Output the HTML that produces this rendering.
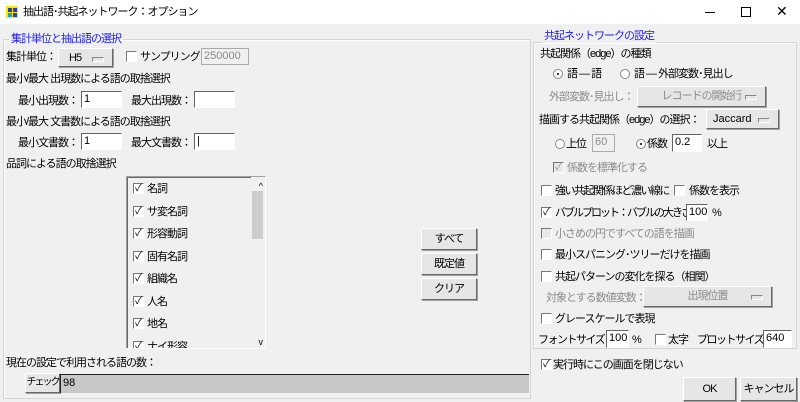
<!DOCTYPE html>
<html><head><meta charset="utf-8"><style>
*{box-sizing:border-box;margin:0;padding:0}
body{width:800px;height:402px;background:#f0f0f0;position:relative;overflow:hidden;font-family:"Liberation Sans","Noto Sans CJK JP",sans-serif;font-size:11px;letter-spacing:-1px;color:#000}
.a{position:absolute;white-space:nowrap;line-height:14px}
.t{letter-spacing:-1.5px}
.u{letter-spacing:-2px}
.g{color:#8a8a8a}
.gb{position:absolute;border:1px solid #d5d5d5;box-shadow:inset 1px 1px 0 #fff}
.lg{position:absolute;background:#f0f0f0;color:#1a1aff;padding:0 2px;line-height:14px;white-space:nowrap}
.btn{position:absolute;white-space:nowrap;background:#e6e6e6;border:1px solid;border-color:#fff #6a6a6a #6a6a6a #fff;box-shadow:1px 1px 0 #a0a0a0;text-align:center;line-height:18px}
.dd:after{content:"";position:absolute;right:8px;top:8px;width:10px;height:3px;border-top:1px solid #888;border-bottom:1px solid #fff;border-left:1px solid #888;border-right:1px solid #fff;}
.in{position:absolute;white-space:nowrap;background:#fff;border:1px solid;border-color:#646464 #fff #fff #646464;line-height:14px;padding-left:2px;letter-spacing:0}
.dis{background:#f0f0f0;color:#8a8a8a}
.cb{position:absolute;width:11px;height:11px;border:1px solid;border-color:#777 #fff #fff #777;background:#fff;font-size:10px;line-height:9px;text-align:center;letter-spacing:0}
.cb.d{background:#e8e8e8;color:#999}
.rb{position:absolute;width:10px;height:10px;border-radius:50%;border:1px solid #888;background:#fff}
.rb.on:after{content:"";position:absolute;left:3px;top:3px;width:2px;height:2px;background:#000;border-radius:50%}
</style></head><body>
<div style="position:absolute;left:0;top:0;width:800px;height:24px;background:#fff"></div>
<div style="position:absolute;left:6px;top:6px;width:12px;height:12px;background:#ffe800;padding:1px">
<div style="position:absolute;left:2px;top:2px;width:4px;height:4px;background:#2040c0"></div><div style="position:absolute;left:7px;top:2px;width:4px;height:4px;background:#2040c0"></div><div style="position:absolute;left:2px;top:7px;width:4px;height:4px;background:#20a0c0"></div><div style="position:absolute;left:7px;top:7px;width:4px;height:4px;background:#2040c0"></div></div>
<div class="a" style="left:23px;top:5px">抽出語･共起ネットワーク：オプション</div>
<div style="position:absolute;left:705px;top:12px;width:10px;height:1px;background:#000"></div>
<div style="position:absolute;left:741px;top:7px;width:10px;height:10px;border:1px solid #000"></div>
<div class="a" style="left:776px;top:4px;font-size:14px">✕</div>

<div class="gb" style="left:3px;top:39px;width:528px;height:360px"></div>
<div class="lg" style="left:9px;top:32px">集計単位と抽出語の選択</div>
<div class="a" style="left:6px;top:50px">集計単位：</div>
<div class="btn dd" style="left:58px;top:48px;width:55px;height:19px;text-align:left;padding-left:10px">H5</div>
<div class="cb" style="left:126px;top:51px"></div>
<div class="a" style="left:140px;top:50px">サンプリング：</div>
<div class="in dis" style="left:201px;top:48px;width:48px;height:17px;border-color:#aaa">250000</div>
<div class="a" style="left:6px;top:72px">最小/最大 出現数による語の取捨選択</div>
<div class="a" style="left:18px;top:94px">最小出現数：</div>
<div class="in" style="left:81px;top:91px;width:41px;height:17px">1</div>
<div class="a" style="left:131px;top:94px">最大出現数：</div>
<div class="in" style="left:194px;top:91px;width:41px;height:17px"></div>
<div class="a" style="left:6px;top:115px">最小/最大 文書数による語の取捨選択</div>
<div class="a" style="left:18px;top:136px">最小文書数：</div>
<div class="in" style="left:81px;top:133px;width:41px;height:17px">1</div>
<div class="a" style="left:131px;top:136px">最大文書数：</div>
<div class="in" style="left:194px;top:133px;width:41px;height:17px">|</div>
<div class="a" style="left:6px;top:157px">品詞による語の取捨選択</div>
<div style="position:absolute;left:126px;top:176px;width:140px;height:173px;border:1px solid;border-color:#a0a0a0 #fff #fff #a0a0a0;box-shadow:inset 1px 1px 0 #696969;overflow:hidden">
<div style="position:absolute;right:0;top:0;width:14px;height:172px;background:#f0f0f0"></div>
<div style="position:absolute;right:2px;top:14px;width:11px;height:48px;background:#cdcdcd"></div>
<div class="a" style="right:3px;top:2px;font-size:9px">^</div>
<div class="a" style="right:3px;top:158px;font-size:9px">v</div>
</div>
<div class="cb" style="left:133px;top:183px">✓</div><div class="a" style="left:147px;top:182px">名詞</div>
<div class="cb" style="left:133px;top:206px">✓</div><div class="a" style="left:147px;top:205px">サ変名詞</div>
<div class="cb" style="left:133px;top:228px">✓</div><div class="a" style="left:147px;top:227px">形容動詞</div>
<div class="cb" style="left:133px;top:251px">✓</div><div class="a" style="left:147px;top:250px">固有名詞</div>
<div class="cb" style="left:133px;top:273px">✓</div><div class="a" style="left:147px;top:272px">組織名</div>
<div class="cb" style="left:133px;top:296px">✓</div><div class="a" style="left:147px;top:295px">人名</div>
<div class="cb" style="left:133px;top:318px">✓</div><div class="a" style="left:147px;top:317px">地名</div>
<div style="position:absolute;left:128px;top:338px;width:122px;height:10px;overflow:hidden"><div class="cb" style="left:5px;top:3px">✓</div><div class="a" style="left:19px;top:2px">ナイ形容</div></div>
<div class="btn" style="left:421px;top:228px;width:56px;height:22px;line-height:20px">すべて</div>
<div class="btn" style="left:421px;top:253px;width:56px;height:22px;line-height:20px">既定値</div>
<div class="btn" style="left:421px;top:278px;width:56px;height:22px;line-height:20px">クリア</div>
<div class="a" style="left:6px;top:356px">現在の設定で利用される語の数：</div>
<div class="btn" style="left:25px;top:373px;width:35px;height:20px;font-size:10px;letter-spacing:-2px">チェック</div>
<div style="position:absolute;left:60px;top:374px;width:469px;height:19px;background:#c8c8c8;border-top:1px solid #222;border-left:1px solid #222;padding-left:2px;line-height:17px;letter-spacing:0">98</div>

<div class="gb" style="left:533px;top:42px;width:264px;height:307px"></div>
<div class="lg" style="left:542px;top:29px">共起ネットワークの設定</div>
<div class="a" style="left:540px;top:47px">共起関係（edge）の種類</div>
<div class="rb on" style="left:553px;top:69px"></div><div class="a" style="left:567px;top:67px">語 — 語</div>
<div class="rb" style="left:620px;top:69px"></div><div class="a" style="left:634px;top:67px">語 — 外部変数･見出し</div>
<div class="a g" style="left:549px;top:90px">外部変数･見出し：</div>
<div class="btn dd g" style="left:637px;top:86px;width:129px;height:21px;line-height:19px">レコードの開始行</div>
<div class="a" style="left:539px;top:113px">描画する共起関係（edge）の選択：</div>
<div class="btn dd" style="left:706px;top:109px;width:73px;height:20px;text-align:left;padding-left:6px;letter-spacing:0">Jaccard</div>
<div class="rb" style="left:555px;top:139px"></div><div class="a" style="left:566px;top:137px">上位</div>
<div class="in dis" style="left:592px;top:134px;width:23px;height:18px;border-color:#aaa">60</div>
<div class="rb on" style="left:636px;top:139px"></div><div class="a" style="left:647px;top:137px">係数</div>
<div class="in" style="left:672px;top:134px;width:30px;height:18px">0.2</div>
<div class="a" style="left:707px;top:137px">以上</div>
<div class="cb d" style="left:553px;top:162px">✓</div><div class="a g" style="left:567px;top:161px">係数を標準化する</div>
<div class="cb" style="left:541px;top:185px"></div><div class="a t" style="left:555px;top:184px">強い共起関係ほど濃い線に</div>
<div class="cb" style="left:674px;top:185px"></div><div class="a" style="left:689px;top:184px">係数を表示</div>
<div class="cb" style="left:541px;top:207px">✓</div><div class="a u" style="left:555px;top:206px">バブルプロット：</div><div class="a u" style="left:627px;top:206px">バブルの大きさ</div>
<div class="in" style="left:686px;top:204px;width:22px;height:17px">100</div><div class="a" style="left:712px;top:206px">%</div>
<div class="cb d" style="left:541px;top:228px"></div><div class="a g" style="left:555px;top:227px">小さめの円ですべての語を描画</div>
<div class="cb" style="left:541px;top:249px"></div><div class="a" style="left:555px;top:248px">最小スパニング･ツリーだけを描画</div>
<div class="cb" style="left:541px;top:271px"></div><div class="a" style="left:555px;top:270px">共起パターンの変化を探る（相関）</div>
<div class="a g" style="left:546px;top:291px">対象とする数値変数：</div>
<div class="btn dd g" style="left:643px;top:286px;width:129px;height:21px;line-height:19px">出現位置</div>
<div class="cb" style="left:541px;top:313px"></div><div class="a" style="left:555px;top:312px">グレースケールで表現</div>
<div class="a t" style="left:538px;top:333px">フォントサイズ：</div>
<div class="in" style="left:606px;top:330px;width:23px;height:18px">100</div><div class="a" style="left:632px;top:333px">%</div>
<div class="cb" style="left:655px;top:334px"></div><div class="a" style="left:668px;top:333px">太字</div><div class="a t" style="left:697px;top:333px">プロットサイズ：</div>
<div class="in" style="left:763px;top:330px;width:29px;height:18px">640</div>
<div class="cb" style="left:541px;top:359px">✓</div><div class="a" style="left:553px;top:358px">実行時にこの画面を閉じない</div>
<div class="btn" style="left:683px;top:377px;width:53px;height:24px;line-height:22px">OK</div>
<div class="btn" style="left:740px;top:377px;width:57px;height:24px;line-height:22px">キャンセル</div>
</body></html>
